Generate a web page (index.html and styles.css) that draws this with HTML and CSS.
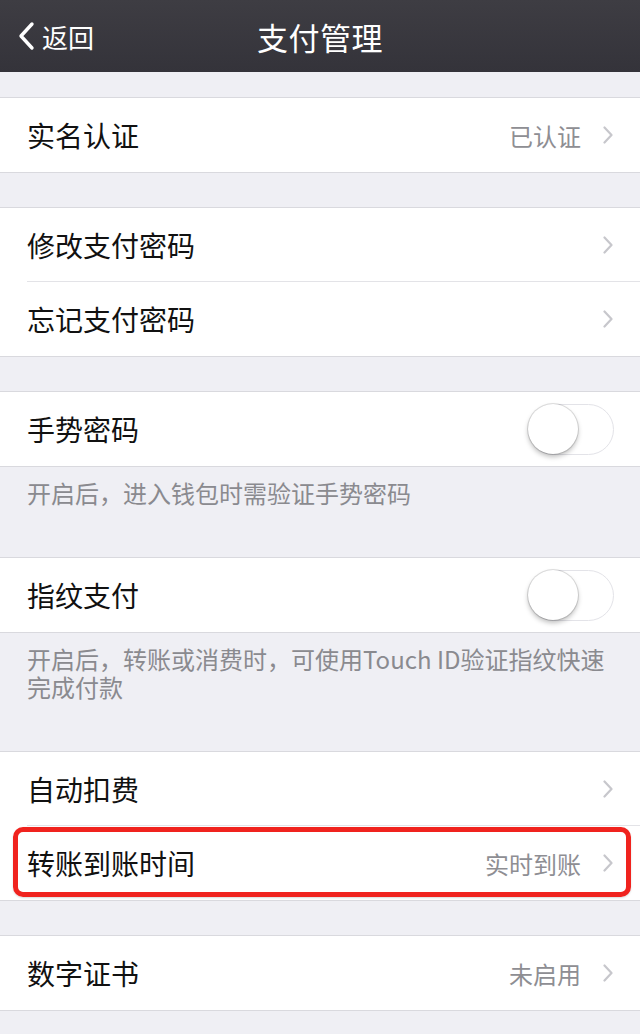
FILE: index.html
```html
<!DOCTYPE html>
<html lang="zh-CN">

<head>
    <meta charset="UTF-8">
    <meta name="viewport" content="width=device-width, initial-scale=1.0">
    <title>支付管理</title>
    <link rel="stylesheet" href="styles.css">
</head>

<body>
    <header class="navBar">
        <a class="backLink" href="#">
            <svg class="backIcon" width="20" height="30" viewBox="0 0 20 30">
                <path d="M16 3 L5 15 L16 27" fill="none" stroke="#fff" stroke-width="3.4" stroke-linecap="round" stroke-linejoin="round" />
            </svg>
            <span>返回</span>
        </a>
        <h1 class="navTitle">支付管理</h1>
    </header>

    <main class="page">
        <ul class="group">
            <li class="row">
                <span class="label">实名认证</span>
                <span class="value">已认证</span>
                <span class="chevron"></span>
            </li>
        </ul>

        <ul class="group">
            <li class="row">
                <span class="label">修改支付密码</span>
                <span class="chevron"></span>
            </li>
            <li class="row">
                <span class="label">忘记支付密码</span>
                <span class="chevron"></span>
            </li>
        </ul>

        <ul class="group hasNote">
            <li class="row">
                <span class="label">手势密码</span>
                <span class="switch"><span class="knob"></span></span>
            </li>
        </ul>
        <p class="note">开启后，进入钱包时需验证手势密码</p>

        <ul class="group hasNote">
            <li class="row">
                <span class="label">指纹支付</span>
                <span class="switch"><span class="knob"></span></span>
            </li>
        </ul>
        <p class="note">开启后，转账或消费时，可使用Touch ID验证指纹快速完成付款</p>

        <ul class="group">
            <li class="row">
                <span class="label">自动扣费</span>
                <span class="chevron"></span>
            </li>
            <li class="row highlighted">
                <span class="label">转账到账时间</span>
                <span class="value">实时到账</span>
                <span class="chevron"></span>
            </li>
        </ul>

        <ul class="group">
            <li class="row">
                <span class="label">数字证书</span>
                <span class="value">未启用</span>
                <span class="chevron"></span>
            </li>
        </ul>
    </main>
</body>

</html>
```

FILE: styles.css
```css
html {
    margin: 0;
    height: 100%;
}

body {
    margin: 0;
    min-height: 100%;
    background-color: #efeff4;
    font-family: "Noto Sans CJK SC", "Noto Sans", sans-serif;
    color: #111;
}

.navBar {
    display: flex;
    align-items: center;
    justify-content: center;
    position: relative;
    height: 72px;
    background-image: linear-gradient(#3e3d43, #34333a);
    color: #fff;
}

.backLink {
    position: absolute;
    left: 16px;
    top: 0;
    bottom: 0;
    display: flex;
    align-items: center;
    gap: 6px;
    color: #fff;
    text-decoration: none;
    font-size: 26px;
}

.backIcon {
    display: block;
}

.navTitle {
    margin: 0;
    font-size: 31px;
    font-weight: 400;
    letter-spacing: 0.5px;
}

.page {
    display: flex;
    flex-direction: column;
    padding-top: 25px;
}

.group {
    list-style: none;
    margin: 0 0 34px 0;
    padding: 0;
    background-color: #fff;
    border-top: solid 1px #d9d9de;
    border-bottom: solid 1px #d9d9de;
}

.hasNote {
    margin-bottom: 0;
}

.row {
    display: flex;
    align-items: center;
    position: relative;
    height: 74px;
    padding: 0 27px;
}

.row + .row::before {
    content: "";
    position: absolute;
    top: -1px;
    left: 27px;
    right: 0;
    border-top: solid 1px #e3e3e7;
}

.label {
    flex: 1;
    font-size: 28px;
}

.value {
    font-size: 24px;
    color: #8e8e93;
    margin-right: 22px;
}

.chevron {
    width: 10px;
    height: 18px;
    background-image: url("data:image/svg+xml;utf8,<svg xmlns='http://www.w3.org/2000/svg' width='10' height='18' viewBox='0 0 10 18'><path d='M1.5 1.5 L8.5 9 L1.5 16.5' fill='none' stroke='%23c7c7cc' stroke-width='2.2' stroke-linecap='round' stroke-linejoin='round'/></svg>");
}

.switch {
    display: block;
    position: relative;
    width: 86px;
    height: 51px;
    margin-right: -1px;
    box-sizing: border-box;
    border: solid 1.5px #e3e3e8;
    border-radius: 26px;
    background-color: #fff;
}

.knob {
    position: absolute;
    left: -1px;
    top: -1px;
    width: 50px;
    height: 50px;
    border-radius: 50%;
    background-color: #fff;
    box-shadow: rgba(0, 0, 0, 0.25) 0px 3px 5px, rgba(0, 0, 0, 0.12) 0px 0px 0px 1px;
}

.note {
    margin: 0;
    padding: 12px 27px 50px 27px;
    font-size: 24px;
    line-height: 28px;
    color: #8a8a8f;
}

.highlighted::after {
    content: "";
    position: absolute;
    top: 1px;
    bottom: 3px;
    left: 13px;
    right: 9px;
    border: solid 5px #f0231e;
    border-radius: 10px;
    box-shadow: rgba(0, 0, 0, 0.15) 0px 1px 2px;
}
```
